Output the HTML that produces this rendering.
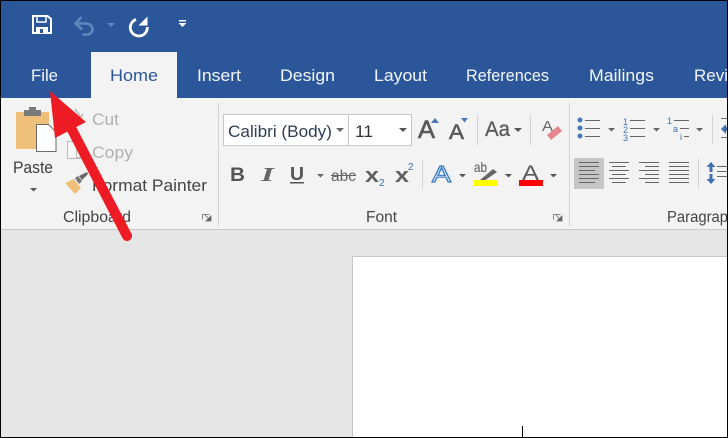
<!DOCTYPE html>
<html><head><meta charset="utf-8"><style>
html,body{margin:0;padding:0;width:728px;height:438px;overflow:hidden;background:#e6e6e6}
svg{display:block}
text{font-family:"Liberation Sans",sans-serif;font-size:17px;fill:#444}
.t{fill:#f4f6fa;font-size:17px}
</style></head><body>
<svg width="728" height="438" viewBox="0 0 728 438" xmlns="http://www.w3.org/2000/svg">
<rect width="728" height="438" fill="#e6e6e6"/>
<rect y="0" width="728" height="98" fill="#2b579a"/>
<rect y="98" width="728" height="131" fill="#f3f3f3"/>
<rect y="229" width="728" height="1" fill="#c9c9c9"/>
<rect x="91" y="52" width="86" height="46" fill="#f3f3f3"/>
<!-- QAT -->
<path d="M33 16h14.500l3.500 3v14H33z" fill="none" stroke="#fff" stroke-width="2"/>
<rect x="37" y="16" width="9" height="6" fill="none" stroke="#fff" stroke-width="1.500"/>
<rect x="36" y="27" width="12" height="6" fill="#fff"/><rect x="40" y="29" width="3" height="4" fill="#2b579a"/>
<path d="M81.500 17L75.500 23.500L82 29.500M76 23.500h10c8 0 9 11 .5 11h-4" fill="none" stroke="#5f86bd" stroke-width="2.600"/>
<path d="M107 23h8l-4 4z" fill="#5f86bd"/>
<path d="M136 19.500A8.500 8.500 0 1 0 147.300 27" fill="none" stroke="#fff" stroke-width="2.800"/>
<path d="M147.500 16.500v9h-9z" fill="#fff"/>
<rect x="179" y="20" width="7" height="1.500" fill="#fff"/><path d="M178.500 23h8l-4 4z" fill="#fff"/>
<!-- Tabs -->
<text class="t" x="31" y="81" textLength="27" lengthAdjust="spacingAndGlyphs">File</text>
<text x="110" y="81" textLength="48" lengthAdjust="spacingAndGlyphs" style="fill:#2b579a">Home</text>
<text class="t" x="197" y="81" textLength="44" lengthAdjust="spacingAndGlyphs">Insert</text>
<text class="t" x="280" y="81" textLength="55" lengthAdjust="spacingAndGlyphs">Design</text>
<text class="t" x="374" y="81" textLength="53" lengthAdjust="spacingAndGlyphs">Layout</text>
<text class="t" x="466" y="81" textLength="83" lengthAdjust="spacingAndGlyphs">References</text>
<text class="t" x="589" y="81" textLength="65" lengthAdjust="spacingAndGlyphs">Mailings</text>
<text class="t" x="694" y="81" textLength="34" lengthAdjust="spacingAndGlyphs">Revi</text>
<!-- separators -->
<rect x="218" y="103" width="1" height="123" fill="#d4d4d4"/>
<rect x="569" y="103" width="1" height="123" fill="#d4d4d4"/>
<rect x="477" y="115" width="1" height="30" fill="#d4d4d4"/>
<rect x="530" y="115" width="1" height="30" fill="#d4d4d4"/>
<rect x="422" y="160" width="1" height="29" fill="#d4d4d4"/>
<rect x="712" y="115" width="1" height="29" fill="#d4d4d4"/>
<rect x="698" y="159" width="1" height="29" fill="#d4d4d4"/>
<!-- Clipboard -->
<path d="M16 112h33v37H16z" fill="#eec07a"/>
<rect x="24" y="110" width="17" height="6" fill="#7a7a7a"/><rect x="29" y="107" width="7" height="5" fill="#7a7a7a"/>
<path d="M36.500 124.500h12l7.500 7.500v19.500H36.500z" fill="#fff" stroke="#6a6a6a"/>
<text x="13" y="173" textLength="40" lengthAdjust="spacingAndGlyphs" style="fill:#3c3c3c">Paste</text>
<path d="M30 188h7l-3.500 3.500z" fill="#555"/>
<path d="M75 109l6 8M83 114l-3 5" stroke="#bbb" stroke-width="1.500" fill="none"/>
<text x="92" y="125" textLength="27" lengthAdjust="spacingAndGlyphs" style="fill:#b0b0b0">Cut</text>
<path d="M67.500 141.500h9l4 4v13h-13z" fill="#f8f8f8" stroke="#bbb"/>
<path d="M76.500 149.500h6v8h-6z" fill="#f3f3f3" stroke="#bbb"/>
<text x="92" y="158" textLength="41" lengthAdjust="spacingAndGlyphs" style="fill:#b0b0b0">Copy</text>
<path d="M65 183l9-4 7 9-6 6z" fill="#eec07a"/>
<path d="M75 178l3-2 4 5-3 3z" fill="#777"/><path d="M79 176l8-4 1 2-6 6z" fill="#666"/>
<text x="92" y="191" textLength="115" lengthAdjust="spacingAndGlyphs">Format Painter</text>
<text x="63" y="222" textLength="68" lengthAdjust="spacingAndGlyphs" style="font-size:15.500px">Clipboard</text>
<path d="M202.500 219.500v-5h7" stroke="#888" fill="none"/><path d="M205 215l5 5M211 216v5h-5z" stroke="#666" fill="#666" stroke-width=".8"/>
<!-- Font -->
<rect x="223.500" y="114.500" width="125" height="31" fill="#fff" stroke="#c6c6c6"/>
<rect x="348.500" y="114.500" width="63" height="31" fill="#fff" stroke="#c6c6c6"/>
<text x="228" y="137" textLength="104" lengthAdjust="spacingAndGlyphs" style="fill:#2f3e55">Calibri (Body)</text>
<path d="M336 128h8l-4 4z" fill="#666"/>
<text x="355" y="137" textLength="18" lengthAdjust="spacingAndGlyphs" style="fill:#333">11</text>
<path d="M399 128h8l-4 4z" fill="#555"/>
<text x="418" y="138" style="font-size:25px;fill:#595959;stroke:#595959;stroke-width:.6" textLength="17" lengthAdjust="spacingAndGlyphs">A</text>
<path d="M431 123l4-5 4 5z" fill="#4a78b4"/>
<text x="449" y="139" style="font-size:21px;fill:#595959;stroke:#595959;stroke-width:.6" textLength="15" lengthAdjust="spacingAndGlyphs">A</text>
<path d="M461 118h7l-3.500 4.500z" fill="#4a78b4"/>
<text x="485" y="136" style="font-size:21px;fill:#595959;stroke:#595959;stroke-width:.3" textLength="25" lengthAdjust="spacingAndGlyphs">Aa</text>
<path d="M514 128h8l-4 4z" fill="#555"/>
<text x="542" y="131" style="font-size:15px;fill:#666" textLength="11" lengthAdjust="spacingAndGlyphs">A</text>
<path d="M547 135l11-9 4 5-11 9z" fill="#e6858e"/>
<text x="230" y="181" style="font-size:19px;font-weight:bold;fill:#555" textLength="15" lengthAdjust="spacingAndGlyphs">B</text>
<text x="261" y="181" style="font-family:'Liberation Serif',serif;font-size:20px;font-style:italic;font-weight:bold;fill:#666" textLength="13" lengthAdjust="spacingAndGlyphs">I</text>
<text x="290" y="180" style="font-size:18px;fill:#555;font-weight:bold" textLength="14" lengthAdjust="spacingAndGlyphs">U</text>
<rect x="290" y="182" width="14" height="1.500" fill="#555"/>
<path d="M317 174h7l-3.500 3.500z" fill="#666"/>
<text x="331" y="181" style="font-size:16px;fill:#666" textLength="25" lengthAdjust="spacingAndGlyphs">abc</text>
<rect x="331" y="175" width="25" height="1" fill="#666"/>
<text x="365" y="182" style="font-size:20px;font-weight:bold;fill:#606060" textLength="14" lengthAdjust="spacingAndGlyphs">x</text>
<text x="379" y="186" style="font-size:10px;fill:#3f70b0">2</text>
<text x="395" y="182" style="font-size:20px;font-weight:bold;fill:#606060" textLength="14" lengthAdjust="spacingAndGlyphs">x</text>
<text x="408" y="170" style="font-size:10px;fill:#3f70b0">2</text>
<text x="432" y="182" style="font-size:23px;fill:#fff;stroke:#3f7cc4;stroke-width:1.200" textLength="19" lengthAdjust="spacingAndGlyphs">A</text>
<path d="M459 174h7l-3.500 3.500z" fill="#555"/>
<text x="474" y="172" style="font-size:14px;fill:#555" textLength="13" lengthAdjust="spacingAndGlyphs">ab</text>
<path d="M480 180l13-11 4 3-13 9z" fill="#666"/>
<rect x="474" y="180" width="24" height="6" fill="#ffff00"/>
<path d="M505 174h7l-3.500 3.500z" fill="#555"/>
<text x="522" y="180" style="font-size:21px;fill:#595959" textLength="17" lengthAdjust="spacingAndGlyphs">A</text>
<rect x="519" y="180" width="24" height="6" fill="#f00"/>
<path d="M550 174h7l-3.500 3.500z" fill="#555"/>
<text x="366" y="222" style="font-size:15.500px" textLength="31" lengthAdjust="spacingAndGlyphs">Font</text>
<path d="M553.500 219.500v-5h7" stroke="#888" fill="none"/><path d="M556 215l5 5M562 216v5h-5z" stroke="#666" fill="#666" stroke-width=".8"/>
<!-- Paragraph -->
<g fill="#4a78b4">
<circle cx="580" cy="120" r="2.500"/><circle cx="580" cy="128" r="2.500"/><circle cx="580" cy="136" r="2.500"/>
</g>
<g fill="#666">
<rect x="585" y="120" width="15" height="1"/><rect x="585" y="128" width="15" height="1"/><rect x="585" y="136" width="15" height="1"/>
<path d="M608 128h7l-3.500 3.500z"/>
<rect x="630" y="120" width="15" height="1"/><rect x="630" y="128" width="15" height="1"/><rect x="630" y="136" width="15" height="1"/>
<path d="M653 128h7l-3.500 3.500z"/>
<rect x="674" y="120" width="15" height="1"/><rect x="680" y="128" width="9" height="1"/><rect x="684" y="136" width="5" height="1"/>
<path d="M696 128h7l-3.500 3.500z"/>
</g>
<g>
<text x="623" y="125" style="font-size:9px;fill:#3f70b0">1</text><text x="623" y="133" style="font-size:9px;fill:#3f70b0">2</text><text x="623" y="141" style="font-size:9px;fill:#3f70b0">3</text>
<text x="667" y="124" style="font-size:9px;fill:#3f70b0">1</text><text x="673" y="132" style="font-size:9px;fill:#3f70b0">a</text><text x="680" y="140" style="font-size:9px;fill:#3f70b0">i</text>
</g>
<path d="M721 129l5-5v3h2v4h-2v3z" fill="#3f70b0"/>
<g fill="#777"><rect x="721" y="118" width="7" height="1"/><rect x="721" y="137" width="7" height="1"/></g>
<rect x="574" y="158" width="30" height="31" fill="#c6c6c6"/>
<g fill="#666">
<rect x="579" y="162" width="20" height="1"/><rect x="579" y="166" width="20" height="1"/><rect x="579" y="170" width="16" height="1"/><rect x="579" y="174" width="20" height="1"/><rect x="579" y="178" width="20" height="1"/><rect x="579" y="182" width="16" height="1"/>
<rect x="609" y="162" width="20" height="1"/><rect x="612" y="166" width="14" height="1"/><rect x="609" y="170" width="20" height="1"/><rect x="612" y="174" width="14" height="1"/><rect x="609" y="178" width="20" height="1"/><rect x="612" y="182" width="14" height="1"/>
<rect x="639" y="162" width="20" height="1"/><rect x="645" y="166" width="14" height="1"/><rect x="639" y="170" width="20" height="1"/><rect x="645" y="174" width="14" height="1"/><rect x="639" y="178" width="20" height="1"/><rect x="645" y="182" width="14" height="1"/>
<rect x="669" y="162" width="20" height="1"/><rect x="669" y="166" width="20" height="1"/><rect x="669" y="170" width="20" height="1"/><rect x="669" y="174" width="20" height="1"/><rect x="669" y="178" width="20" height="1"/><rect x="669" y="182" width="20" height="1"/>
<rect x="717" y="166" width="11" height="1"/><rect x="717" y="171" width="11" height="1"/><rect x="717" y="176" width="11" height="1"/>
</g>
<path d="M711 162l-4.500 5h3v5h3v-5h3zM711 184l-4.500-5h3v-5h3v5h3z" fill="#3f70b0"/>
<text x="667" y="222" style="font-size:15.500px" textLength="61" lengthAdjust="spacingAndGlyphs">Paragrap</text>
<!-- page -->
<rect x="352.500" y="256.500" width="380" height="190" fill="#fff" stroke="#c6c6c6"/>
<rect x="522" y="426" width="1" height="12" fill="#000"/>
<!-- arrow -->
<path d="M50 91L86 122L55 138Z" fill="#ed1c24"/>
<path d="M68 122L127 236" stroke="#ed1c24" stroke-width="10" stroke-linecap="round" fill="none"/>
<!-- border -->
<rect x=".5" y=".5" width="727" height="437" fill="none" stroke="#000"/>
</svg>
</body></html>
